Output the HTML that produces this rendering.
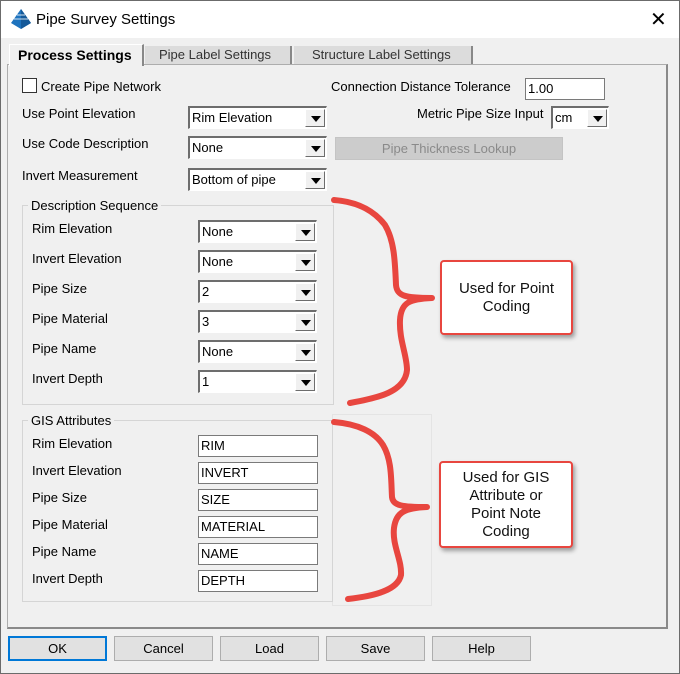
<!DOCTYPE html>
<html><head><style>
*{box-sizing:border-box;margin:0;padding:0}
body{width:680px;height:674px;background:#f0f0f0;font-family:"Liberation Sans",Arial,sans-serif;font-size:13px;color:#000;position:relative;overflow:hidden}
.a{position:absolute;white-space:nowrap}
.win{left:0;top:0;width:680px;height:674px;border:1px solid #6b6b6b}
.title{left:1px;top:1px;width:678px;height:37px;background:#fff}
.combo{position:absolute;background:#fff;border-top:2px solid #6d6d6d;border-left:2px solid #6d6d6d;border-right:1px solid #fff;border-bottom:1px solid #fff;height:23px;padding-left:2px;line-height:19px;font-size:13px}
.combo .btn{position:absolute;right:1px;top:1px;width:20px;height:18px;background:#f0f0f0;border-top:1px solid #fff;border-left:1px solid #fff;border-right:1px solid #6d6d6d;border-bottom:1px solid #6d6d6d}
.combo .btn:after{content:"";position:absolute;left:5px;top:6px;border-left:5px solid transparent;border-right:5px solid transparent;border-top:6px solid #000}
.inp{position:absolute;background:#fff;border:1px solid #7a7a7a;height:22px;padding-left:2px;line-height:20px}
.grp{position:absolute;border:1px solid #d5d5d5}
.gl{position:absolute;background:#f0f0f0;padding:0 3px}
.bt{position:absolute;top:636px;width:99px;height:25px;background:#e1e1e1;border:1px solid #adadad;text-align:center;line-height:23px}
.note{position:absolute;background:#fff;border:2px solid #e8463f;border-radius:4px;box-shadow:2px 3px 4px rgba(0,0,0,.35);text-align:center;font-size:15px;line-height:18px;color:#111}
</style></head><body>
<div class="a win"></div>
<div class="a title"></div>
<svg class="a" style="left:10px;top:9px" width="22" height="20" viewBox="0 0 22 20"><polygon points="11,0 21,14 11,20 1,14" fill="#1e73be"/><polygon points="11,0 21,14 11,20" fill="#155a9a"/><line x1="4" y1="10" x2="18" y2="10" stroke="#fff" stroke-width=".8"/><line x1="7" y1="6" x2="15" y2="6" stroke="#fff" stroke-width=".8"/></svg>
<div class="a" style="left:36px;top:11px;font-size:15px">Pipe Survey Settings</div>
<div class="a" style="left:650px;top:7px;font-size:20px">✕</div>

<div class="a" style="left:7px;top:64px;width:661px;height:565px;border:1px solid #adadad;border-right:2px solid #8a8a8a;border-bottom:2px solid #8a8a8a;background:#f0f0f0"></div>
<div class="a" style="left:9px;top:44px;width:135px;height:22px;background:#f0f0f0;border:1px solid #fff;border-right:2px solid #888;border-bottom:none;font-weight:bold;font-size:14px;line-height:20px;padding-left:8px">Process Settings</div>
<div class="a" style="left:145px;top:46px;width:147px;height:18px;background:#dcdcdc;border-right:2px solid #888;color:#333;line-height:18px;padding-left:14px">Pipe Label Settings</div>
<div class="a" style="left:294px;top:46px;width:179px;height:18px;background:#dcdcdc;border-right:2px solid #888;color:#333;line-height:18px;padding-left:18px">Structure Label Settings</div>

<div class="a" style="left:22px;top:78px;width:15px;height:15px;border:1px solid #333;background:#fff"></div>
<div class="a" style="left:41px;top:79px">Create Pipe Network</div>
<div class="a" style="left:22px;top:106px">Use Point Elevation</div>
<div class="a" style="left:22px;top:136px">Use Code Description</div>
<div class="a" style="left:22px;top:168px">Invert Measurement</div>
<div class="combo" style="left:188px;top:106px;width:139px">Rim Elevation<div class="btn"></div></div>
<div class="combo" style="left:188px;top:136px;width:139px">None<div class="btn"></div></div>
<div class="combo" style="left:188px;top:168px;width:139px">Bottom of pipe<div class="btn"></div></div>

<div class="a" style="left:331px;top:79px">Connection Distance Tolerance</div>
<div class="inp" style="left:525px;top:78px;width:80px">1.00</div>
<div class="a" style="left:417px;top:106px">Metric Pipe Size Input</div>
<div class="combo" style="left:551px;top:106px;width:58px">cm<div class="btn"></div></div>
<div class="a" style="left:335px;top:137px;width:228px;height:23px;background:#ccc;border:1px solid #c4c4c4;color:#8a8a8a;text-align:center;line-height:21px">Pipe Thickness Lookup</div>

<div class="grp" style="left:22px;top:205px;width:312px;height:200px"></div>
<div class="gl" style="left:28px;top:198px">Description Sequence</div>
<div class="a" style="left:32px;top:221px">Rim Elevation</div>
<div class="a" style="left:32px;top:251px">Invert Elevation</div>
<div class="a" style="left:32px;top:281px">Pipe Size</div>
<div class="a" style="left:32px;top:311px">Pipe Material</div>
<div class="a" style="left:32px;top:341px">Pipe Name</div>
<div class="a" style="left:32px;top:371px">Invert Depth</div>
<div class="combo" style="left:198px;top:220px;width:119px">None<div class="btn"></div></div>
<div class="combo" style="left:198px;top:250px;width:119px">None<div class="btn"></div></div>
<div class="combo" style="left:198px;top:280px;width:119px">2<div class="btn"></div></div>
<div class="combo" style="left:198px;top:310px;width:119px">3<div class="btn"></div></div>
<div class="combo" style="left:198px;top:340px;width:119px">None<div class="btn"></div></div>
<div class="combo" style="left:198px;top:370px;width:119px">1<div class="btn"></div></div>

<div class="grp" style="left:332px;top:414px;width:100px;height:192px;border-color:#e4e4e4"></div>
<div class="grp" style="left:22px;top:420px;width:311px;height:182px"></div>
<div class="gl" style="left:28px;top:413px">GIS Attributes</div>
<div class="a" style="left:32px;top:436px">Rim Elevation</div>
<div class="a" style="left:32px;top:463px">Invert Elevation</div>
<div class="a" style="left:32px;top:490px">Pipe Size</div>
<div class="a" style="left:32px;top:517px">Pipe Material</div>
<div class="a" style="left:32px;top:544px">Pipe Name</div>
<div class="a" style="left:32px;top:571px">Invert Depth</div>
<div class="inp" style="left:198px;top:435px;width:120px">RIM</div>
<div class="inp" style="left:198px;top:462px;width:120px">INVERT</div>
<div class="inp" style="left:198px;top:489px;width:120px">SIZE</div>
<div class="inp" style="left:198px;top:516px;width:120px">MATERIAL</div>
<div class="inp" style="left:198px;top:543px;width:120px">NAME</div>
<div class="inp" style="left:198px;top:570px;width:120px">DEPTH</div>

<svg class="a" style="left:0;top:0" width="680" height="674"><g fill="none" stroke="#e8463f" stroke-width="6" stroke-linecap="round" stroke-linejoin="round">
<path d="M334,200 C360,202 375,212 385,225 C394,240 395,260 396,285 C397,296 405,298 432,298 M432,298 C410,299 401,302 400,320 C399,340 407,355 407,370 C405,392 378,398 350,403"/>
<path d="M334,422 C358,424 375,432 383,445 C392,460 391,480 392,497 C393,506 403,507 427,507 M427,507 C405,508 396,512 394,528 C392,545 402,560 401,575 C398,590 375,596 348,599"/>
</g></svg>
<div class="note" style="left:440px;top:260px;width:133px;height:75px;padding-top:18px">Used for Point<br>Coding</div>
<div class="note" style="left:439px;top:461px;width:134px;height:87px;padding-top:6px">Used for GIS<br>Attribute or<br>Point Note<br>Coding</div>

<div class="bt" style="left:8px;border:2px solid #0078d7;line-height:21px">OK</div>
<div class="bt" style="left:114px">Cancel</div>
<div class="bt" style="left:220px">Load</div>
<div class="bt" style="left:326px">Save</div>
<div class="bt" style="left:432px">Help</div>
</body></html>
